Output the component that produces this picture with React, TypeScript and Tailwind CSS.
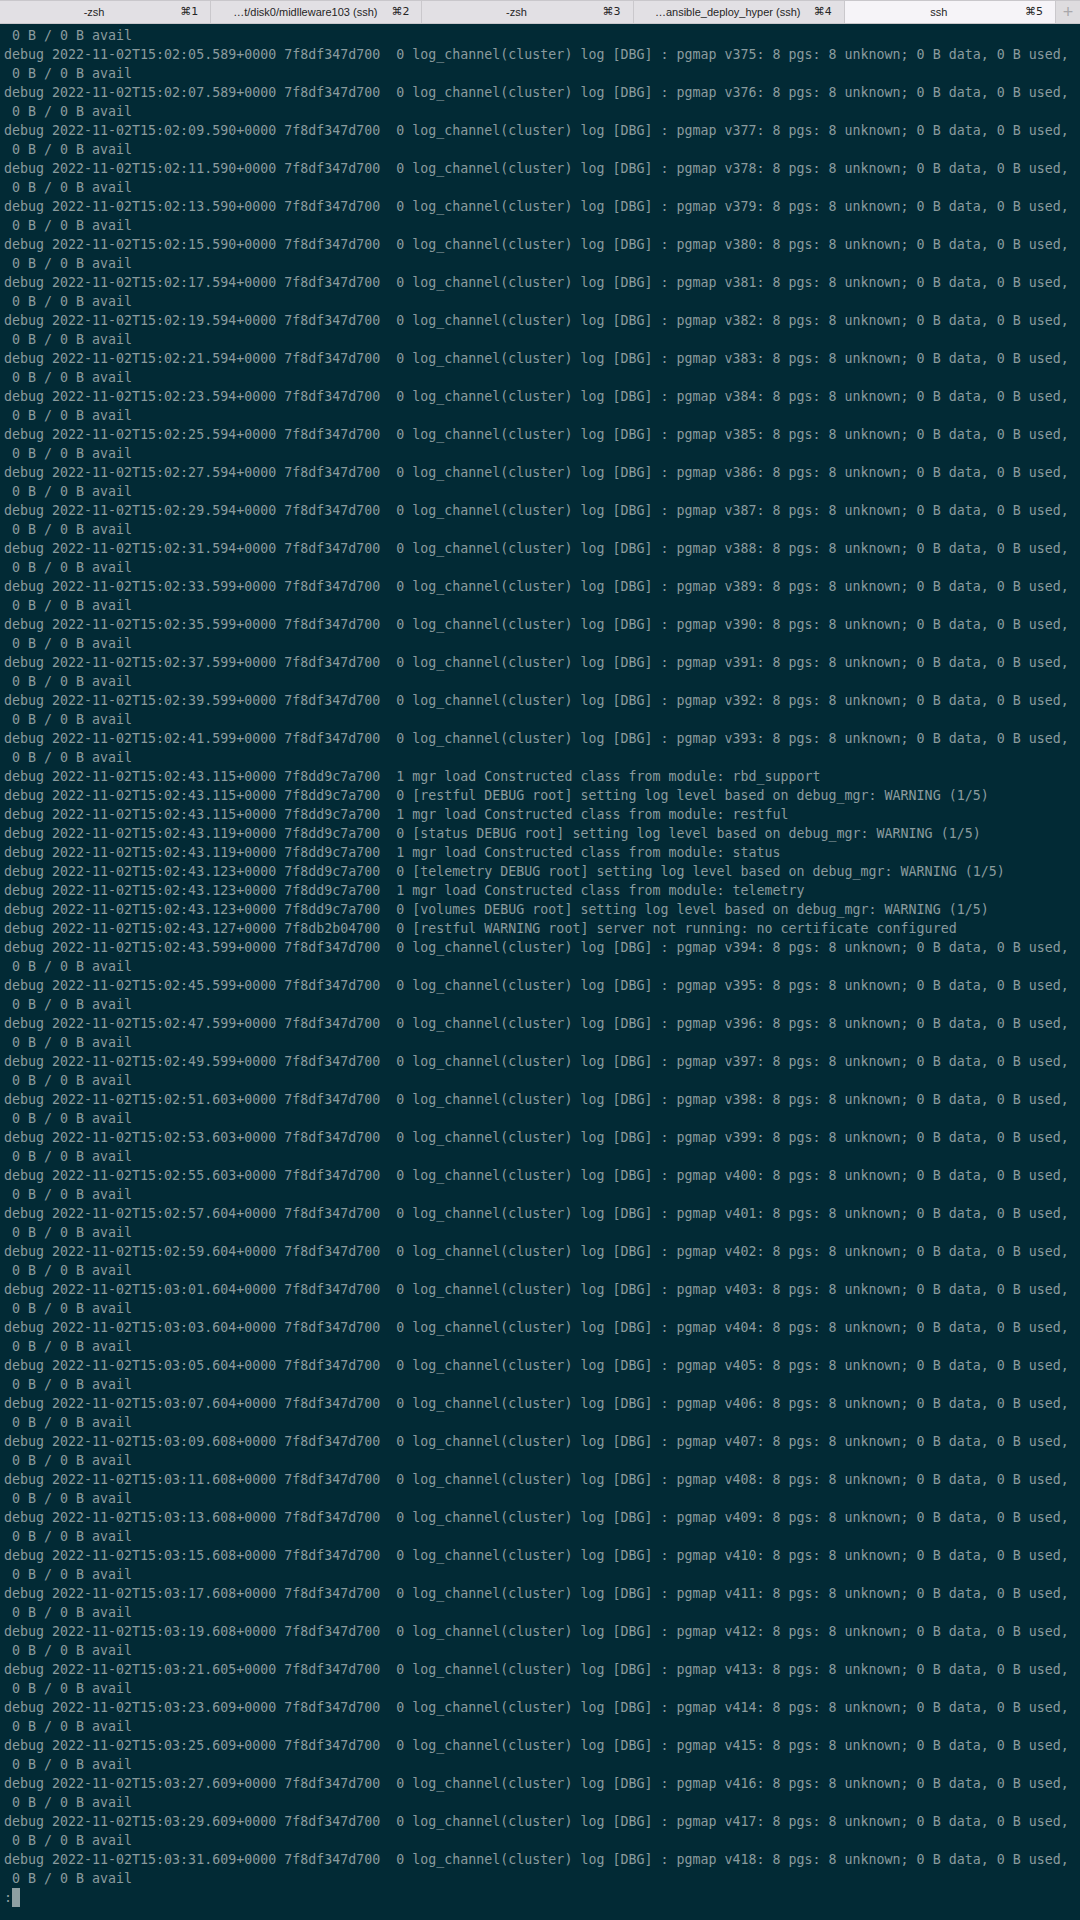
import React from 'react';

const Tabs = [
  { id: 1, title: '-zsh', key: '⌘1', active: false },
  { id: 2, title: '…t/disk0/midlleware103 (ssh)', key: '⌘2', active: false },
  { id: 3, title: '-zsh', key: '⌘3', active: false },
  { id: 4, title: '…ansible_deploy_hyper (ssh)', key: '⌘4', active: false },
  { id: 5, title: 'ssh', key: '⌘5', active: true },
];

const first = [
  '05.589', '07.589', '09.590', '11.590', '13.590', '15.590', '17.594',
  '19.594', '21.594', '23.594', '25.594', '27.594', '29.594', '31.594',
  '33.599', '35.599', '37.599', '39.599', '41.599',
];

const second = [
  '02:43.599', '02:45.599', '02:47.599', '02:49.599', '02:51.603',
  '02:53.603', '02:55.603', '02:57.604', '02:59.604', '03:01.604',
  '03:03.604', '03:05.604', '03:07.604', '03:09.608', '03:11.608',
  '03:13.608', '03:15.608', '03:17.608', '03:19.608', '03:21.605',
  '03:23.609', '03:25.609', '03:27.609', '03:29.609', '03:31.609',
];

const avail = ' 0 B / 0 B avail';

const pg = (time: string, v: number) =>
  `debug 2022-11-02T15:${time}+0000 7f8df347d700  0 log_channel(cluster) log [DBG] : pgmap v${v}: 8 pgs: 8 unknown; 0 B data, 0 B used,`;

const mgr = [
  'debug 2022-11-02T15:02:43.115+0000 7f8dd9c7a700  1 mgr load Constructed class from module: rbd_support',
  'debug 2022-11-02T15:02:43.115+0000 7f8dd9c7a700  0 [restful DEBUG root] setting log level based on debug_mgr: WARNING (1/5)',
  'debug 2022-11-02T15:02:43.115+0000 7f8dd9c7a700  1 mgr load Constructed class from module: restful',
  'debug 2022-11-02T15:02:43.119+0000 7f8dd9c7a700  0 [status DEBUG root] setting log level based on debug_mgr: WARNING (1/5)',
  'debug 2022-11-02T15:02:43.119+0000 7f8dd9c7a700  1 mgr load Constructed class from module: status',
  'debug 2022-11-02T15:02:43.123+0000 7f8dd9c7a700  0 [telemetry DEBUG root] setting log level based on debug_mgr: WARNING (1/5)',
  'debug 2022-11-02T15:02:43.123+0000 7f8dd9c7a700  1 mgr load Constructed class from module: telemetry',
  'debug 2022-11-02T15:02:43.123+0000 7f8dd9c7a700  0 [volumes DEBUG root] setting log level based on debug_mgr: WARNING (1/5)',
  'debug 2022-11-02T15:02:43.127+0000 7f8db2b04700  0 [restful WARNING root] server not running: no certificate configured',
];

const Lines: string[] = [avail];
first.forEach((t, i) => {
  Lines.push(pg(`02:${t}`, 375 + i));
  Lines.push(avail);
});
Lines.push(...mgr);
second.forEach((t, i) => {
  Lines.push(pg(t, 394 + i));
  Lines.push(avail);
});

const App: React.FC = () => (
  <div className="w-[1080px] h-[1920px] bg-[#022a35] overflow-hidden">
    <div className="flex h-[24px] bg-[#e2e0e4] border-t border-b border-[#c9c7cb] font-['Liberation_Sans','DejaVu_Sans',sans-serif] text-[11px] text-[#262626]">
      {Tabs.map(tab => (
        <div
          key={tab.id}
          className={`flex flex-1 items-center border-r border-[#cac8cc] ${
            tab.active ? 'bg-[#f6f4f8]' : 'bg-[#e2e0e4]'
          }`}
        >
          <div className="flex-1 text-center truncate pl-[8px]">{tab.title}</div>
          <div className="pr-[12px] font-['DejaVu_Sans','Liberation_Sans',sans-serif] text-[11px]">
            {tab.key}
          </div>
        </div>
      ))}
      <div className="w-[24px] flex items-center justify-center bg-[#dedcdf] text-[#a9a7ab] text-[18px] font-light">
        +
      </div>
    </div>
    <div className="pt-[2px] pl-[4px] font-['DejaVu_Sans_Mono','Liberation_Mono',monospace] text-[13.3px] leading-[19px] text-[#8a9b9e] whitespace-pre">
      {Lines.map((line, i) => (
        <div key={i}>{line}</div>
      ))}
      <div className="flex items-center h-[19px]">
        <span>:</span>
        <span className="w-[8px] h-[19px] bg-[#8e9fa2]"></span>
      </div>
    </div>
  </div>
);

export default App;
